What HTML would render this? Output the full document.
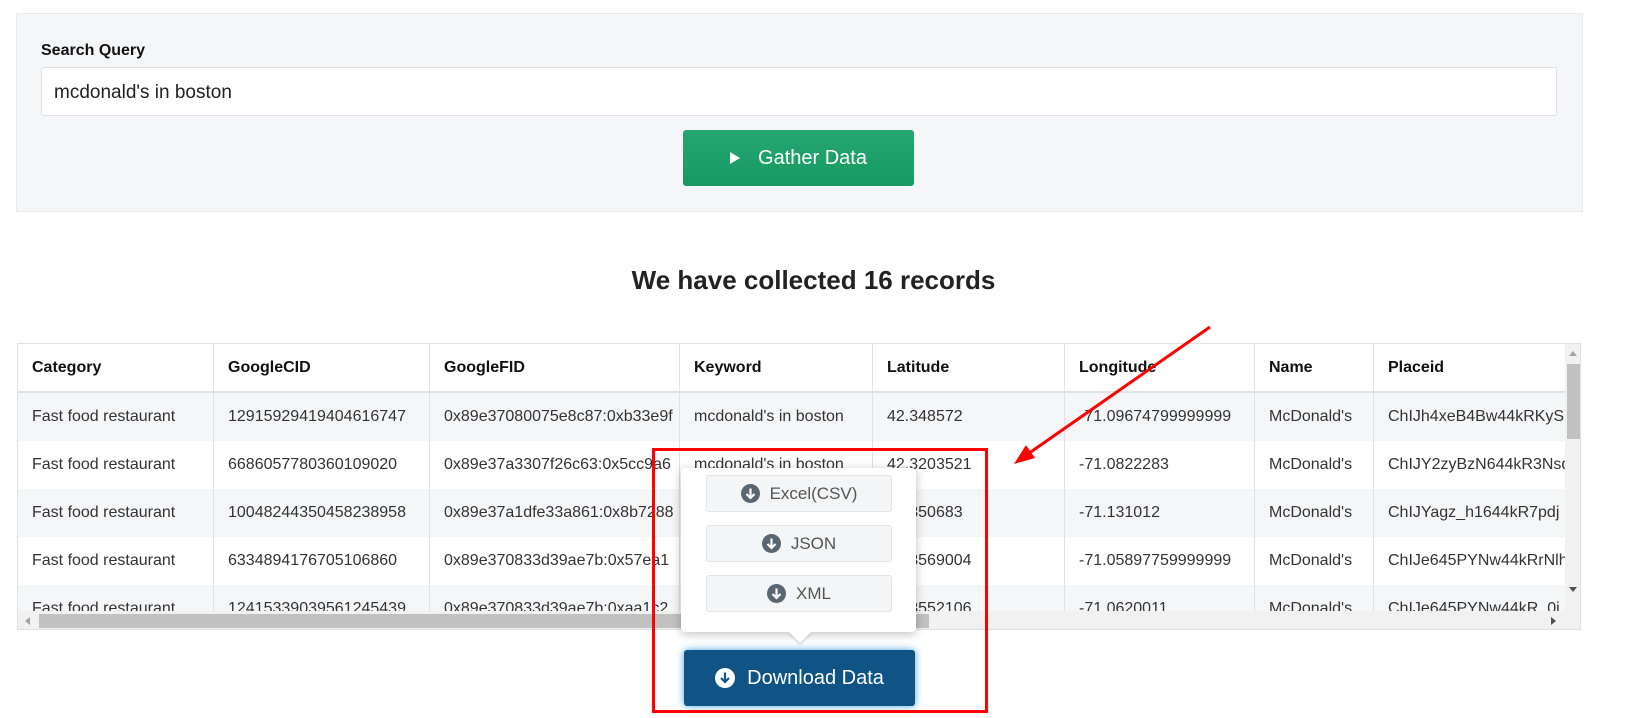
<!DOCTYPE html>
<html><head><meta charset="utf-8"><style>
*{box-sizing:border-box;margin:0;padding:0}
body{width:1627px;height:718px;background:#fff;font-family:"Liberation Sans",Arial,sans-serif;color:#212529;position:relative;overflow:hidden}
.abs{position:absolute}
.panel{left:16px;top:13px;width:1567px;height:199px;background:#f5f6f8;border:1px solid #e8eaed}
.label{left:41px;top:42px;font-size:16px;font-weight:bold;color:#111}
.input{left:41px;top:67px;width:1516px;height:49px;background:#fff;border:1px solid #dfe2e6;border-radius:3px;font-size:19px;padding:14px 12px 0;color:#222}
.gather{left:683px;top:130px;width:231px;height:56px;background:linear-gradient(#25a86f,#179a62);border-radius:3px;color:#fff;font-size:20px;display:flex;align-items:center;justify-content:center}
h2{position:absolute;left:0;width:1627px;top:265px;text-align:center;font-size:26px;font-weight:bold;color:#222}
.table{left:17px;top:343px;width:1564px;height:287px;border:1px solid #dee2e6;overflow:hidden;background:#fff}
.row{position:absolute;left:0;height:48px;width:1547px}
.cell{position:absolute;top:0;height:100%;font-size:16px;padding-left:14px;white-space:nowrap;overflow:hidden;display:flex;align-items:center;border-left:1px solid #dee2e6;color:#333}
.hdr .cell{color:#111;font-weight:bold;font-size:16px}
.popover{left:681px;top:468px;width:235px;height:164px;background:#fff;border-radius:4px;box-shadow:0 2px 10px rgba(0,0,0,.25)}
.pb{position:absolute;left:25px;width:186px;height:37px;background:#f4f5f6;border:1px solid #e2e4e6;border-radius:3px;display:flex;align-items:center;justify-content:center;font-size:17px;color:#555}
.ic{display:inline-block;width:19px;height:19px;border-radius:50%;background:#5a6773;margin-right:10px;position:relative}
.dl{left:684px;top:650px;width:231px;height:56px;background:#0f5485;border-radius:3px;box-shadow:0 0 8px #4aa3e0;color:#fff;font-size:20px;display:flex;align-items:center;justify-content:center}
</style></head><body>
<div class="abs panel"></div>
<div class="abs label">Search Query</div>
<div class="abs input">mcdonald's in boston</div>
<div class="abs gather"><span style="display:inline-block;width:0;height:0;border-left:10px solid #fff;border-top:6px solid transparent;border-bottom:6px solid transparent;margin-right:18px"></span>Gather Data</div>
<h2>We have collected 16 records</h2>

<div class="abs table">
 <div class="row hdr" style="top:0;height:49px;border-bottom:2px solid #dee2e6">
  <div class="cell" style="left:0;width:195px;border-left:none">Category</div>
  <div class="cell" style="left:195px;width:216px">GoogleCID</div>
  <div class="cell" style="left:411px;width:250px">GoogleFID</div>
  <div class="cell" style="left:661px;width:193px">Keyword</div>
  <div class="cell" style="left:854px;width:192px">Latitude</div>
  <div class="cell" style="left:1046px;width:190px">Longitude</div>
  <div class="cell" style="left:1236px;width:119px">Name</div>
  <div class="cell" style="left:1355px;width:192px">Placeid</div>
 </div>
 <div class="row" style="top:49px;background:#f5f6f8">
  <div class="cell" style="left:0;width:195px;border-left:none">Fast food restaurant</div>
  <div class="cell" style="left:195px;width:216px">12915929419404616747</div>
  <div class="cell" style="left:411px;width:250px">0x89e37080075e8c87:0xb33e9f</div>
  <div class="cell" style="left:661px;width:193px">mcdonald's in boston</div>
  <div class="cell" style="left:854px;width:192px">42.348572</div>
  <div class="cell" style="left:1046px;width:190px">-71.09674799999999</div>
  <div class="cell" style="left:1236px;width:119px">McDonald's</div>
  <div class="cell" style="left:1355px;width:192px">ChIJh4xeB4Bw44kRKySb</div>
 </div>
 <div class="row" style="top:97px">
  <div class="cell" style="left:0;width:195px;border-left:none">Fast food restaurant</div>
  <div class="cell" style="left:195px;width:216px">6686057780360109020</div>
  <div class="cell" style="left:411px;width:250px">0x89e37a3307f26c63:0x5cc9a6</div>
  <div class="cell" style="left:661px;width:193px">mcdonald's in boston</div>
  <div class="cell" style="left:854px;width:192px">42.3203521</div>
  <div class="cell" style="left:1046px;width:190px">-71.0822283</div>
  <div class="cell" style="left:1236px;width:119px">McDonald's</div>
  <div class="cell" style="left:1355px;width:192px">ChIJY2zyBzN644kR3Nsd</div>
 </div>
 <div class="row" style="top:145px;background:#f5f6f8">
  <div class="cell" style="left:0;width:195px;border-left:none">Fast food restaurant</div>
  <div class="cell" style="left:195px;width:216px">10048244350458238958</div>
  <div class="cell" style="left:411px;width:250px">0x89e37a1dfe33a861:0x8b7288</div>
  <div class="cell" style="left:661px;width:193px">mcdonald's in boston</div>
  <div class="cell" style="left:854px;width:192px">42.350683</div>
  <div class="cell" style="left:1046px;width:190px">-71.131012</div>
  <div class="cell" style="left:1236px;width:119px">McDonald's</div>
  <div class="cell" style="left:1355px;width:192px">ChIJYagz_h1644kR7pdj</div>
 </div>
 <div class="row" style="top:193px">
  <div class="cell" style="left:0;width:195px;border-left:none">Fast food restaurant</div>
  <div class="cell" style="left:195px;width:216px">6334894176705106860</div>
  <div class="cell" style="left:411px;width:250px">0x89e370833d39ae7b:0x57ea1</div>
  <div class="cell" style="left:661px;width:193px">mcdonald's in boston</div>
  <div class="cell" style="left:854px;width:192px">42.3569004</div>
  <div class="cell" style="left:1046px;width:190px">-71.05897759999999</div>
  <div class="cell" style="left:1236px;width:119px">McDonald's</div>
  <div class="cell" style="left:1355px;width:192px">ChIJe645PYNw44kRrNlh</div>
 </div>
 <div class="row" style="top:241px;background:#f5f6f8">
  <div class="cell" style="left:0;width:195px;border-left:none">Fast food restaurant</div>
  <div class="cell" style="left:195px;width:216px">12415339039561245439</div>
  <div class="cell" style="left:411px;width:250px">0x89e370833d39ae7b:0xaa1c2</div>
  <div class="cell" style="left:661px;width:193px">mcdonald's in boston</div>
  <div class="cell" style="left:854px;width:192px">42.3552106</div>
  <div class="cell" style="left:1046px;width:190px">-71.0620011</div>
  <div class="cell" style="left:1236px;width:119px">McDonald's</div>
  <div class="cell" style="left:1355px;width:192px">ChIJe645PYNw44kR_0i</div>
 </div>
 <div class="abs" style="left:1547px;top:0;width:17px;height:267px;background:#f1f1f1"></div>
 <div class="abs" style="left:1549px;top:20px;width:13px;height:75px;background:#c1c1c1"></div>
 <div class="abs" style="left:1551px;top:7px;border-left:4px solid transparent;border-right:4px solid transparent;border-bottom:5px solid #a3a3a3"></div>
 <div class="abs" style="left:1551px;top:243px;border-left:4px solid transparent;border-right:4px solid transparent;border-top:5px solid #505050"></div>
 <div class="abs" style="left:0;top:267px;width:1564px;height:20px;background:#f1f1f1"></div>
 <div class="abs" style="left:21px;top:270px;width:890px;height:14px;background:#c1c1c1"></div>
 <div class="abs" style="left:7px;top:273px;border-top:4px solid transparent;border-bottom:4px solid transparent;border-right:5px solid #a3a3a3"></div>
 <div class="abs" style="left:1533px;top:273px;border-top:4px solid transparent;border-bottom:4px solid transparent;border-left:5px solid #505050"></div>
</div>

<div class="abs popover">
 <div class="pb" style="top:7px"><span class="ic"><svg width="19" height="19" viewBox="0 0 19 19"><path d="M9.5 4.5v9M5.5 10l4 4 4-4" stroke="#fff" stroke-width="2.2" fill="none"/></svg></span>Excel(CSV)</div>
 <div class="pb" style="top:57px"><span class="ic"><svg width="19" height="19" viewBox="0 0 19 19"><path d="M9.5 4.5v9M5.5 10l4 4 4-4" stroke="#fff" stroke-width="2.2" fill="none"/></svg></span>JSON</div>
 <div class="pb" style="top:107px"><span class="ic"><svg width="19" height="19" viewBox="0 0 19 19"><path d="M9.5 4.5v9M5.5 10l4 4 4-4" stroke="#fff" stroke-width="2.2" fill="none"/></svg></span>XML</div>
</div>
<div class="abs" style="left:789px;top:632px;width:0;height:0;border-left:11px solid transparent;border-right:11px solid transparent;border-top:11px solid #fff;filter:drop-shadow(0 2px 1px rgba(0,0,0,.15))"></div>

<div class="abs dl"><svg width="20" height="20" viewBox="0 0 20 20" style="margin-right:12px"><circle cx="10" cy="10" r="10" fill="#fff"/><path d="M10 4.5v9M6 10l4 4 4-4" stroke="#0f5485" stroke-width="2.2" fill="none"/></svg>Download Data</div>

<div class="abs" style="left:652px;top:448px;width:336px;height:265px;border:3px solid #f00"></div>
<svg class="abs" style="left:0;top:0" width="1627" height="718"><line x1="1210" y1="327" x2="1025" y2="456" stroke="#f00" stroke-width="3"/><polygon points="1014,464 1026,445 1035,458" fill="#f00"/></svg>
</body></html>
